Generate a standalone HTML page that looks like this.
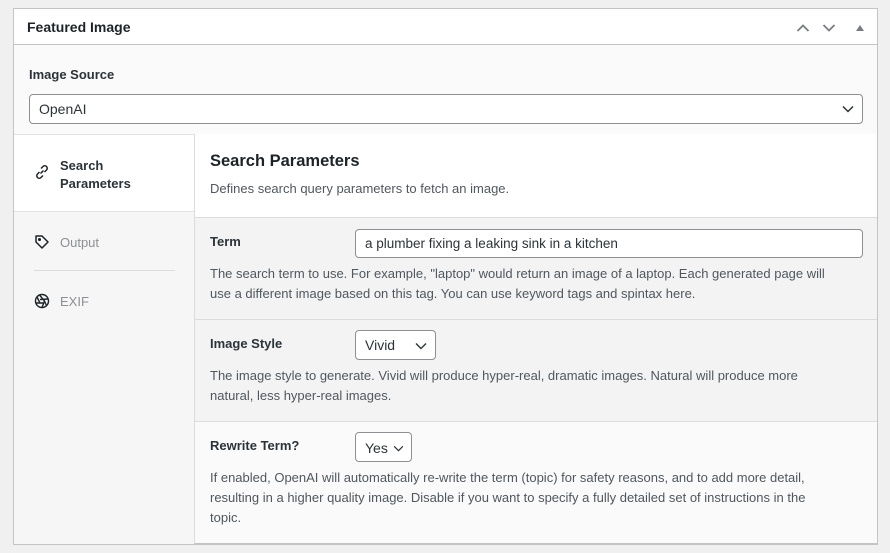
<!DOCTYPE html>
<html><head><meta charset="utf-8"><style>
*{box-sizing:border-box;margin:0;padding:0}
body{width:890px;height:553px;background:#f0f0f1;font-family:"Liberation Sans",Arial,sans-serif;color:#1d2327;position:relative;overflow:hidden}
.box{position:absolute;left:13px;top:8px;width:865px;height:537px;border:1px solid #c3c4c7;background:#fafafa}
.hdr{position:absolute;left:0;top:0;width:863px;height:36px;background:#fff;border-bottom:1px solid #c3c4c7}
.hdr h2{position:absolute;left:13px;top:10px;font-size:14px;font-weight:bold}
.lbl{position:absolute;font-size:13px;font-weight:bold;color:#2c3338}
.sel{position:absolute;border:1px solid #8c8f94;border-radius:4px;background:#fff;font-size:14px;color:#2c3338}
.nav{position:absolute;left:0;top:125px;width:181px;height:410px;background:#f6f6f6;border-top:1px solid #e2e2e2}
.tab{position:absolute;font-size:13px}
.main{position:absolute;left:180px;top:125px;width:683px;height:410px;border-left:1px solid #dcdcde;border-bottom:1px solid #c3c4c7;background:#fff}
.row{position:absolute;left:0;width:682px;border-top:1px solid #dcdcde}
.desc{position:absolute;left:15px;font-size:13px;color:#50575e;line-height:20px;white-space:nowrap}
</style></head><body>
<div class="box">
 <div class="hdr"><h2>Featured Image</h2>
  <svg style="position:absolute;left:782px;top:14px" width="14" height="10" viewBox="0 0 14 10"><path d="M1.5 8 L7 2.5 L12.5 8" fill="none" stroke="#787c82" stroke-width="1.8"/></svg>
  <svg style="position:absolute;left:808px;top:14px" width="14" height="10" viewBox="0 0 14 10"><path d="M1.5 2 L7 7.5 L12.5 2" fill="none" stroke="#787c82" stroke-width="1.8"/></svg>
  <svg style="position:absolute;left:841px;top:15px" width="10" height="8" viewBox="0 0 10 8"><path d="M1 7 L5 1 L9 7Z" fill="#787c82"/></svg>
 </div>
 <div class="lbl" style="left:15px;top:58px">Image Source</div>
 <div class="sel" style="left:15px;top:85px;width:834px;height:30px"><span style="position:absolute;left:9px;top:6px">OpenAI</span>
  <svg style="position:absolute;right:8px;top:10px" width="12" height="8" viewBox="0 0 12 8"><path d="M1 1.5 L6 6.5 L11 1.5" fill="none" stroke="#2c3338" stroke-width="1.5"/></svg></div>
 <div class="nav">
  <div style="position:absolute;left:0;top:0;width:181px;height:77px;background:#fff;border-bottom:1px solid #e2e2e2"></div>
  <svg style="position:absolute;left:20px;top:29px" width="16" height="16" viewBox="0 0 16 16" fill="none" stroke="#1d2327" stroke-width="1.5"><path d="M6.5 9.5 L9.5 6.5"/><path d="M7 4.5 l2-2 a2.4 2.4 0 0 1 3.5 3.5 l-2 2"/><path d="M9 11.5 l-2 2 a2.4 2.4 0 0 1 -3.5 -3.5 l2-2"/></svg>
  <div class="tab" style="left:46px;top:22px;font-weight:bold;line-height:18px;color:#2c3338">Search<br>Parameters</div>
  <svg style="position:absolute;left:20px;top:99px" width="16" height="16" viewBox="0 0 16 16" fill="none" stroke="#1d2327" stroke-width="1.5"><path d="M2 2 H8 L14 8 L8 14 L2 8Z" stroke-linejoin="round"/><circle cx="5.5" cy="5.5" r="0.8" fill="#1d2327"/></svg>
  <div class="tab" style="left:46px;top:100px;color:#8c8f94">Output</div>
  <div style="position:absolute;left:20px;top:135px;width:141px;border-top:1px solid #dcdcde"></div>
  <svg style="position:absolute;left:20px;top:158px" width="16" height="16" viewBox="0 0 16 16" fill="none" stroke="#1d2327" stroke-width="1.4"><circle cx="8" cy="8" r="6.5"/><path d="M5.5 2 L10.5 8 M14 6 L6 6.5 M12.5 12.5 L9.5 6 M8 14.5 L10.5 8 M2 10 L9.5 10 M3 4 L6 10"/></svg>
  <div class="tab" style="left:46px;top:159px;color:#8c8f94">EXIF</div>
 </div>
 <div class="main">
  <div style="position:absolute;left:15px;top:18px;font-size:16.5px;font-weight:bold;color:#1d2327">Search Parameters</div>
  <div class="desc" style="top:45px">Defines search query parameters to fetch an image.</div>
  <div class="row" style="top:83px;height:102px;background:#f3f3f3">
   <div class="lbl" style="left:15px;top:16px">Term</div>
   <div class="sel" style="left:160px;top:11px;width:508px;height:29px;font-size:13.5px"><span style="position:absolute;left:9px;top:6px">a plumber fixing a leaking sink in a kitchen</span></div>
   <div class="desc" style="top:46px">The search term to use. For example, "laptop" would return an image of a laptop. Each generated page will<br>use a different image based on this tag. You can use keyword tags and spintax here.</div>
  </div>
  <div class="row" style="top:185px;height:102px;background:#f3f3f3">
   <div class="lbl" style="left:15px;top:16px">Image Style</div>
   <div class="sel" style="left:160px;top:10px;width:81px;height:30px"><span style="position:absolute;left:9px;top:6px">Vivid</span>
    <svg style="position:absolute;right:8px;top:11px" width="12" height="8" viewBox="0 0 12 8"><path d="M1 1.5 L6 6.5 L11 1.5" fill="none" stroke="#2c3338" stroke-width="1.4"/></svg></div>
   <div class="desc" style="top:46px">The image style to generate. Vivid will produce hyper-real, dramatic images. Natural will produce more<br>natural, less hyper-real images.</div>
  </div>
  <div class="row" style="top:287px;height:122px;background:#fafafa">
   <div class="lbl" style="left:15px;top:16px">Rewrite Term?</div>
   <div class="sel" style="left:160px;top:10px;width:57px;height:30px"><span style="position:absolute;left:9px;top:7px">Yes</span>
    <svg style="position:absolute;right:7px;top:12px" width="11" height="7" viewBox="0 0 12 8"><path d="M1 1.5 L6 6.5 L11 1.5" fill="none" stroke="#2c3338" stroke-width="1.4"/></svg></div>
   <div class="desc" style="top:46px">If enabled, OpenAI will automatically re-write the term (topic) for safety reasons, and to add more detail,<br>resulting in a higher quality image. Disable if you want to specify a fully detailed set of instructions in the<br>topic.</div>
  </div>
 </div>
</div>
</body></html>
